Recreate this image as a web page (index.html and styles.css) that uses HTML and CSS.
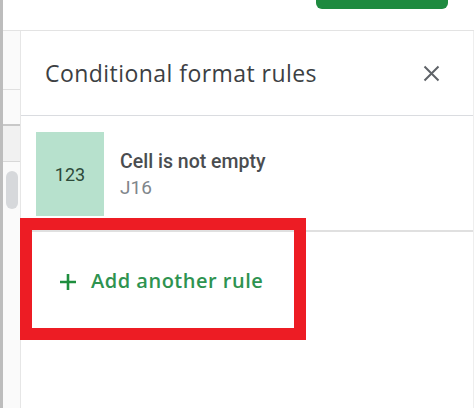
FILE: index.html
```html
<!DOCTYPE html>
<html>
<head>
<meta charset="utf-8">
<link rel="stylesheet" href="styles.css">
</head>
<body>
<div class="app">
  <div class="topbar">
    <div class="green-btn"></div>
  </div>
  <div class="main">
    <div class="sheet-strip">
      <div class="row-a"></div>
      <div class="row-b"></div>
      <div class="row-c"></div>
      <div class="thumb"></div>
    </div>
    <div class="panel">
      <div class="panel-header">
        <div class="title">Conditional format rules</div>
        <svg class="close" width="17" height="17" viewBox="0 0 17 17"><path d="M1.5 1.5 L15.5 15.5 M15.5 1.5 L1.5 15.5" stroke="#5f6368" stroke-width="2" fill="none"/></svg>
      </div>
      <div class="rule">
        <div class="swatch">123</div>
        <div class="rule-text">
          <div class="rule-name">Cell is not empty</div>
          <div class="rule-range">J16</div>
        </div>
      </div>
      <div class="add-rule">
        <svg class="plus" width="16" height="16" viewBox="0 0 16 16"><path d="M8 0 V16 M0 8 H16" stroke="#1e8e3e" stroke-width="2.6" fill="none"/></svg>
        <span class="add-label">Add another rule</span>
      </div>
    </div>
  </div>
  <div class="highlight"></div>
</div>
</body>
</html>
```

FILE: styles.css
```css
html, body {
  margin: 0;
  padding: 0;
  background: #ffffff;
}
body {
  width: 474px;
  height: 413px;
  overflow: hidden;
  font-family: Roboto, "Liberation Sans", Arial, sans-serif;
}
.app {
  position: relative;
  width: 474px;
  height: 408px;
  border-left: 3px solid #bdbdbd;
  box-sizing: border-box;
  display: flex;
  flex-direction: column;
}
.topbar {
  height: 30px;
  border-bottom: 1px solid #e3e3e3;
  display: flex;
  justify-content: flex-end;
  align-items: flex-start;
  flex: none;
}
.green-btn {
  width: 132px;
  height: 9px;
  margin-right: 26px;
  background: #1e8a3f;
  border-radius: 0 0 6px 6px;
}
.main {
  flex: 1;
  display: flex;
}
.sheet-strip {
  width: 17px;
  flex: none;
  display: flex;
  flex-direction: column;
  align-items: center;
  background: #fafafa;
}
.row-a {
  width: 100%;
  height: 58px;
  border-bottom: 1px solid #e0e0e0;
}
.row-b {
  width: 100%;
  height: 34px;
  border-bottom: 2px solid #c8c8c8;
}
.row-c {
  width: 100%;
  height: 35px;
  background: #f1f1f1;
  border-bottom: 1px solid #d8d8d8;
}
.thumb {
  margin-top: 9px;
  width: 12px;
  height: 38px;
  border-radius: 6px;
  background: #d6d8db;
}
.panel {
  flex: 1;
  border-left: 1px solid #e6e6e6;
  border-right: 1px solid #eeeeee;
  display: flex;
  flex-direction: column;
}
.panel-header {
  height: 85px;
  box-sizing: border-box;
  border-bottom: 1px solid #dadce0;
  display: flex;
  align-items: center;
  justify-content: space-between;
  padding: 0 33px 0 24px;
}
.title {
  font-family: "Open Sans", Roboto, sans-serif;
  font-size: 23px;
  letter-spacing: 0.45px;
  color: #3c4043;
  margin-top: -1px;
}
.close {
  display: block;
  margin-top: 1px;
}
.rule {
  height: 116px;
  box-sizing: border-box;
  border-bottom: 2px solid #e0e0e0;
  display: flex;
  align-items: flex-start;
  padding: 16px 0 0 15px;
}
.swatch {
  width: 68px;
  height: 84px;
  background: #b7e1cd;
  color: #2d4a3a;
  font-size: 18px;
  display: flex;
  align-items: center;
  justify-content: center;
}
.rule-text {
  padding: 18px 0 0 16px;
}
.rule-name {
  font-size: 19.5px;
  font-weight: 500;
  color: #4a4d50;
  line-height: 24px;
}
.rule-range {
  font-size: 19px;
  color: #80868b;
  line-height: 24px;
  margin-top: 2px;
}
.add-rule {
  display: flex;
  align-items: center;
  padding: 37px 0 0 39px;
}
.plus {
  display: block;
}
.add-label {
  font-family: "Open Sans", Roboto, sans-serif;
  margin-left: 15px;
  font-size: 20px;
  letter-spacing: 0.5px;
  font-weight: 600;
  color: #2e9350;
  margin-top: -2px;
}
.highlight {
  position: absolute;
  left: 17px;
  top: 218px;
  width: 286px;
  height: 122px;
  box-sizing: border-box;
  border: 12px solid #ed1c24;
}
```
